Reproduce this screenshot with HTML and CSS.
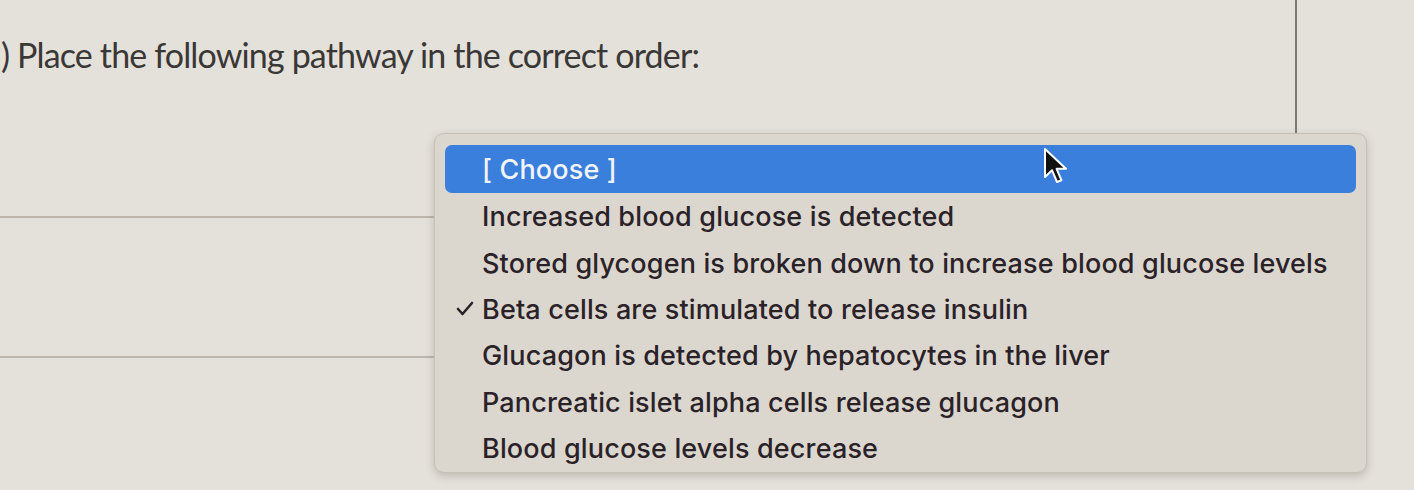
FILE: index.html
```html
<!DOCTYPE html>
<html>
<head>
<meta charset="utf-8">
<link rel="stylesheet" href="styles.css">
</head>
<body>
<div class="page">
  <div class="question">
    <h1 class="prompt"><span class="num">)</span> Place the following pathway in the correct order:</h1>
  </div>
  <div class="rows">
    <div class="row"></div>
    <div class="row"></div>
  </div>

  <div class="menu">
    <div class="opt selected">[ Choose ]</div>
    <div class="opt">Increased blood glucose is detected</div>
    <div class="opt">Stored glycogen is broken down to increase blood glucose levels</div>
    <div class="opt checked">
      <svg class="check" width="18" height="15" viewBox="0 0 18 15"><path d="M2 8 L6.5 13 L16 2" fill="none" stroke="#2b2329" stroke-width="2.6" stroke-linecap="round" stroke-linejoin="round"/></svg>Beta cells are stimulated to release insulin</div>
    <div class="opt">Glucagon is detected by hepatocytes in the liver</div>
    <div class="opt">Pancreatic islet alpha cells release glucagon</div>
    <div class="opt">Blood glucose levels decrease</div>
  </div>

  <svg class="cursor" width="26" height="38" viewBox="0 0 13 19">
    <path d="M1 1 L1 15 L4.5 11.6 L7 17.5 L9.2 16.6 L6.8 10.9 L11.5 10.9 Z" fill="#111" stroke="#fff" stroke-width="1" stroke-linejoin="round"/>
  </svg>
</div>
</body>
</html>
```

FILE: styles.css
```css
html, body {
  margin: 0;
  padding: 0;
}
body {
  background: #e4e1da;
  width: 1414px;
  height: 490px;
  overflow: hidden;
}
.page {
  position: relative;
  width: 1414px;
  height: 490px;
}
.question {
  width: 1297px;
  height: 136px;
  border-right: 2px solid #7d7872;
  box-sizing: border-box;
  padding-top: 35px;
}
.prompt {
  margin: 0;
  padding-left: 1px;
  font-family: Lato, "Open Sans", sans-serif;
  font-weight: 400;
  font-size: 34px;
  letter-spacing: -0.85px;
  color: #3a3737;
  line-height: 40px;
  white-space: nowrap;
}
.rows {
  display: flex;
  flex-direction: column;
}
.row {
  height: 138px;
  border-bottom: 2px solid #bcb6ad;
  width: 1297px;
}
.row:first-child {
  height: 80px;
}
.menu {
  position: absolute;
  left: 434px;
  top: 133px;
  width: 933px;
  height: 340px;
  box-sizing: border-box;
  background: #dbd7cf;
  border: 1px solid #c6c0b6;
  border-radius: 10px;
  box-shadow: 0 3px 8px rgba(80, 70, 60, 0.25);
  padding: 11px 10px 0 10px;
  display: flex;
  flex-direction: column;
}
.opt {
  height: 47px;
  display: flex;
  align-items: center;
  padding-left: 37px;
  font-family: Inter, "Liberation Sans", Arial, sans-serif;
  font-weight: 500;
  font-size: 27px;
  letter-spacing: 0.15px;
  color: #2a2228;
  white-space: nowrap;
  position: relative;
}
.selected {
  background: #3a7fdc;
  color: #f2f4fa;
  border-radius: 7px;
  height: 49px;
}
.check {
  position: absolute;
  left: 11px;
  top: 15px;
}
.cursor {
  position: absolute;
  left: 1043px;
  top: 147px;
}
```
